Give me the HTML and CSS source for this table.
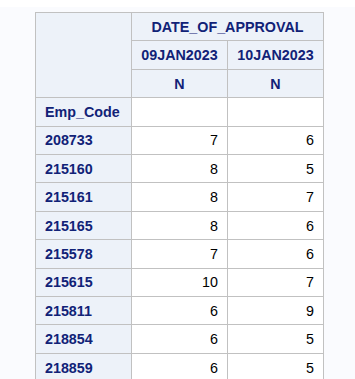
FILE: index.html
```html
<!DOCTYPE html>
<html>
<head>
<meta charset="utf-8">
<link rel="stylesheet" href="styles.css">
</head>
<body>
<div class="topbar"></div>
<div class="wrap">
<table class="report">
  <thead>
    <tr>
      <th class="corner" rowspan="3"></th>
      <th class="hdr" colspan="2">DATE_OF_APPROVAL</th>
    </tr>
    <tr>
      <th class="hdr">09JAN2023</th>
      <th class="hdr">10JAN2023</th>
    </tr>
    <tr>
      <th class="hdr">N</th>
      <th class="hdr">N</th>
    </tr>
    <tr>
      <th class="rowhdr">Emp_Code</th>
      <td class="data"></td>
      <td class="data"></td>
    </tr>
  </thead>
  <tbody>
    <tr><th class="rowhdr">208733</th><td class="data">7</td><td class="data">6</td></tr>
    <tr><th class="rowhdr">215160</th><td class="data">8</td><td class="data">5</td></tr>
    <tr><th class="rowhdr">215161</th><td class="data">8</td><td class="data">7</td></tr>
    <tr><th class="rowhdr">215165</th><td class="data">8</td><td class="data">6</td></tr>
    <tr><th class="rowhdr">215578</th><td class="data">7</td><td class="data">6</td></tr>
    <tr><th class="rowhdr">215615</th><td class="data">10</td><td class="data">7</td></tr>
    <tr><th class="rowhdr">215811</th><td class="data">6</td><td class="data">9</td></tr>
    <tr><th class="rowhdr">218854</th><td class="data">6</td><td class="data">5</td></tr>
    <tr><th class="rowhdr">218859</th><td class="data">6</td><td class="data">5</td></tr>
  </tbody>
</table>
</div>
</body>
</html>
```
FILE: styles.css
```css
html, body {
  margin: 0;
  padding: 0;
  background: #fafbfe;
}
body {
  font-family: "Liberation Sans", Arial, sans-serif;
  font-size: 14.3px;
}
.topbar {
  height: 7px;
  background: #ffffff;
}
.wrap {
  padding: 5px 0 0 35px;
}
.report {
  border-collapse: collapse;
  border: 1px solid #c1c1c1;
}
.report th, .report td {
  border: 1px solid #c1c1c1;
  height: 28.42px;
  padding: 0 9px;
  box-sizing: border-box;
}
.report th {
  background: #edf2f9;
  color: #112277;
  font-weight: bold;
}
.corner {
  width: 96px;
}
.hdr {
  text-align: center;
  width: 96px;
}
.rowhdr {
  text-align: left;
}
.data {
  background: #ffffff;
  color: #000000;
  text-align: right;
  padding-right: 9px;
}
```
